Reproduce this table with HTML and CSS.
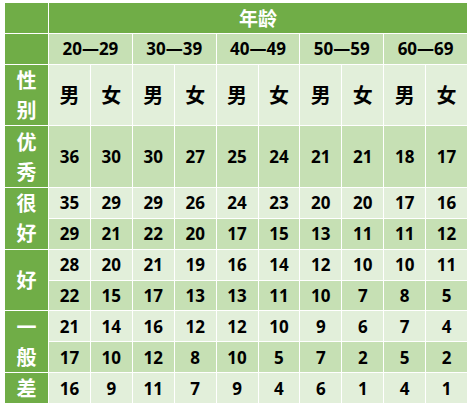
FILE: index.html
```html
<!DOCTYPE html>
<html lang="zh">
<head>
<meta charset="utf-8">
<link rel="stylesheet" href="styles.css">
</head>
<body>
<div class="sheet">
  <div class="c hd r1"></div>
  <div class="c hd r1 title span10">年龄</div>

  <div class="c hd"></div>
  <div class="c md age span2">20—29</div>
  <div class="c md age span2">30—39</div>
  <div class="c md age span2">40—49</div>
  <div class="c md age span2">50—59</div>
  <div class="c md age span2">60—69</div>

  <div class="c hd lbl tall"><span>性</span><span>别</span></div>
  <div class="c lt cjk tall">男</div><div class="c lt cjk tall">女</div>
  <div class="c lt cjk tall">男</div><div class="c lt cjk tall">女</div>
  <div class="c lt cjk tall">男</div><div class="c lt cjk tall">女</div>
  <div class="c lt cjk tall">男</div><div class="c lt cjk tall">女</div>
  <div class="c lt cjk tall">男</div><div class="c lt cjk tall">女</div>

  <div class="c hd lbl tall"><span>优</span><span>秀</span></div>
  <div class="c md num tall">36</div><div class="c md num tall">30</div>
  <div class="c md num tall">30</div><div class="c md num tall">27</div>
  <div class="c md num tall">25</div><div class="c md num tall">24</div>
  <div class="c md num tall">21</div><div class="c md num tall">21</div>
  <div class="c md num tall">18</div><div class="c md num tall">17</div>

  <div class="c hd lbl tall"><span>很</span><span>好</span></div>
  <div class="c lt num">35</div><div class="c lt num">29</div>
  <div class="c lt num">29</div><div class="c lt num">26</div>
  <div class="c lt num">24</div><div class="c lt num">23</div>
  <div class="c lt num">20</div><div class="c lt num">20</div>
  <div class="c lt num">17</div><div class="c lt num">16</div>
  <div class="c md num">29</div><div class="c md num">21</div>
  <div class="c md num">22</div><div class="c md num">20</div>
  <div class="c md num">17</div><div class="c md num">15</div>
  <div class="c md num">13</div><div class="c md num">11</div>
  <div class="c md num">11</div><div class="c md num">12</div>

  <div class="c hd lbl tall"><span>好</span></div>
  <div class="c lt num">28</div><div class="c lt num">20</div>
  <div class="c lt num">21</div><div class="c lt num">19</div>
  <div class="c lt num">16</div><div class="c lt num">14</div>
  <div class="c lt num">12</div><div class="c lt num">10</div>
  <div class="c lt num">10</div><div class="c lt num">11</div>
  <div class="c md num">22</div><div class="c md num">15</div>
  <div class="c md num">17</div><div class="c md num">13</div>
  <div class="c md num">13</div><div class="c md num">11</div>
  <div class="c md num">10</div><div class="c md num">7</div>
  <div class="c md num">8</div><div class="c md num">5</div>

  <div class="c hd lbl tall"><span>一</span><span>般</span></div>
  <div class="c lt num">21</div><div class="c lt num">14</div>
  <div class="c lt num">16</div><div class="c lt num">12</div>
  <div class="c lt num">12</div><div class="c lt num">10</div>
  <div class="c lt num">9</div><div class="c lt num">6</div>
  <div class="c lt num">7</div><div class="c lt num">4</div>
  <div class="c md num">17</div><div class="c md num">10</div>
  <div class="c md num">12</div><div class="c md num">8</div>
  <div class="c md num">10</div><div class="c md num">5</div>
  <div class="c md num">7</div><div class="c md num">2</div>
  <div class="c md num">5</div><div class="c md num">2</div>

  <div class="c hd lbl"><span>差</span></div>
  <div class="c lt num">16</div><div class="c lt num">9</div>
  <div class="c lt num">11</div><div class="c lt num">7</div>
  <div class="c lt num">9</div><div class="c lt num">4</div>
  <div class="c lt num">6</div><div class="c lt num">1</div>
  <div class="c lt num">4</div><div class="c lt num">1</div>
</div>
</body>
</html>
```
FILE: styles.css
```css
html, body {
  margin: 0;
  padding: 0;
  background: #ffffff;
}
body {
  padding: 3px 0 0 5px;
}
.sheet {
  width: 462px;
  height: 400px;
  display: grid;
  grid-template-columns: 43px repeat(10, 1fr);
  grid-template-rows: repeat(13, 1fr);
  gap: 1px;
  background: #ffffff;
  font-family: "Open Sans", "Noto Sans CJK SC", sans-serif;
  font-weight: 700;
  color: #000000;
}
.c {
  display: flex;
  align-items: center;
  justify-content: center;
  min-width: 0;
}
.hd { background: #70ad47; color: #ffffff; }
.md { background: #c6e0b4; }
.lt { background: #e2efda; }
.span2 { grid-column: span 2; }
.span10 { grid-column: span 10; }
.tall { grid-row: span 2; }
.title {
  font-family: "Noto Sans CJK SC", sans-serif;
  font-size: 19px;
  padding-bottom: 1px;
}
.age {
  font-size: 17px;
}
.num {
  font-size: 17px;
}
.cjk {
  font-family: "Noto Sans CJK SC", sans-serif;
  font-size: 20px;
}
.lbl {
  flex-direction: column;
  font-family: "Noto Sans CJK SC", sans-serif;
  font-size: 20px;
  line-height: 30px;
}
```
